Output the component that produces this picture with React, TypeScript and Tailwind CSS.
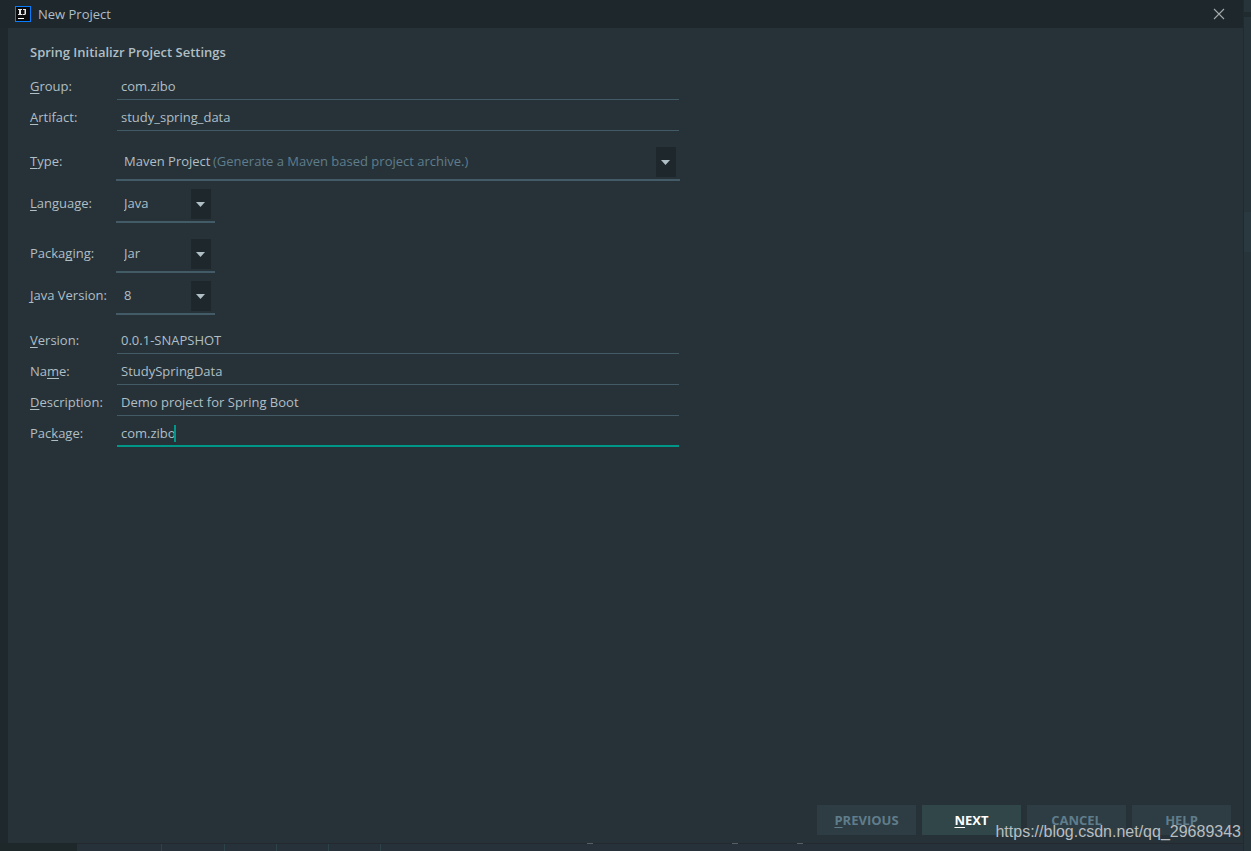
import type { ReactNode } from 'react';

function Mnemonic({ text, at }: { text: string; at: number }) {
  return (
    <>
      {text.slice(0, at)}
      <span className="underline underline-offset-2 [text-decoration-skip-ink:none]">{text[at]}</span>
      {text.slice(at + 1)}
    </>
  );
}

type RowProps = { id: string; label: string; at: number; children: ReactNode };

function Row({ id, label, at, children }: RowProps) {
  return (
    <div className="flex items-stretch">
      <label htmlFor={id} className="w-[86px] shrink-0 pt-[6px] leading-5 whitespace-nowrap">
        <Mnemonic text={label} at={at} />
      </label>
      {children}
    </div>
  );
}

type TextRowProps = { id: string; label: string; at: number; value: string; focused?: boolean };

function TextRow({ id, label, at, value, focused = false }: TextRowProps) {
  return (
    <div className="flex h-[31px]">
      <label htmlFor={id} className="w-[87px] shrink-0 pt-[7px] leading-5 whitespace-nowrap">
        <Mnemonic text={label} at={at} />
      </label>
      <div className={focused ? 'relative mr-px flex grow border-b-2 border-[#009688]' : 'relative mr-px flex grow border-b border-[#425b67]'}>
        <input id={id} defaultValue={value} className="mt-[7px] h-5 w-full bg-transparent px-1 leading-5 outline-none" />
        {focused && <span className="absolute top-[9px] left-[57px] h-[17px] w-[2px] bg-[#009688]" />}
      </div>
    </div>
  );
}

type ComboRowProps = { id: string; label: string; at: number; value: string; hint?: string };

function ComboRow({ id, label, at, value, hint }: ComboRowProps) {
  return (
    <Row id={id} label={label} at={at}>
      <div className={hint ? 'relative h-9 grow border-b-2 border-[#425b67]' : 'relative h-9 w-[99px] border-b-2 border-[#425b67]'}>
        <select id={id} className="h-full w-full appearance-none bg-transparent px-2 outline-none">
          <option>{value}</option>
        </select>
        {hint && <span className="pointer-events-none absolute top-[6px] left-[97px] leading-5 text-[#607d8b]">{hint}</span>}
        <span className="pointer-events-none absolute top-[2px] right-1 flex h-[30px] w-5 items-center justify-center bg-[#1e272c]">
          <svg width="10" height="6" viewBox="0 0 10 6" aria-hidden="true">
            <path d="M0 1h9L4.5 6z" fill="#b0bec5" />
          </svg>
        </span>
      </div>
    </Row>
  );
}

function DialogButton({ text, at = -1, primary = false }: { text: string; at?: number; primary?: boolean }) {
  return (
    <button
      type="button"
      className={
        primary
          ? 'h-[30px] w-[99px] bg-[#304649] pt-[2px] font-bold text-white'
          : 'h-[30px] w-[99px] bg-[#2e3c43] pt-[2px] font-bold text-[#607d8b]'
      }
    >
      {at >= 0 ? <Mnemonic text={text} at={at} /> : text}
    </button>
  );
}

function Logo() {
  return (
    <svg width="16" height="16" viewBox="0 0 16 16" aria-hidden="true">
      <rect width="16" height="16" fill="#087cfa" />
      <rect x="1" y="1" width="14" height="14" fill="#0a0c0e" />
      <path d="M3 3h4v1H6v4h1v1H3V8h1V4H3zM8 3h3v5l-1 1H7.500V8H9.500V4H8z" fill="#e6e8ea" />
      <path d="M3 12h6v1H3z" fill="#fff" />
    </svg>
  );
}

export default function App() {
  return (
    <div className="relative flex min-h-screen bg-[#27343a] font-['Open_Sans','Noto_Sans_CJK_SC',sans-serif] text-[13px] text-[#b0bec5]">
      <div className="flex grow flex-col">
        <header className="flex h-7 items-center bg-[#1e272c] pr-[18px] pl-[15px]">
          <Logo />
          <h1 className="ml-[7px] grow leading-5">New Project</h1>
          <button type="button" aria-label="Close" className="flex size-3 items-center justify-center">
            <svg width="12" height="12" viewBox="0 0 12 12" aria-hidden="true">
              <path d="M1 1l10 10M11 1L1 11" stroke="#a4a9ac" strokeWidth="1.1" />
            </svg>
          </button>
        </header>

        <div className="flex grow border-l-8 border-[#1f282d]">
          <main className="flex grow flex-col bg-[#263238] pt-[14px] pr-3 pb-2 pl-[22px]">
            <form className="w-full max-w-[650px]">
              <h2 className="mb-[7px] leading-5 font-semibold">Spring Initializr Project Settings</h2>
              <TextRow id="group" label="Group:" at={0} value="com.zibo" />
              <TextRow id="artifact" label="Artifact:" at={0} value="study_spring_data" />
              <div className="mt-[14px] mb-2 flex flex-col gap-[14px]">
                <div className="flex flex-col gap-[6px]">
                  <ComboRow id="type" label="Type:" at={0} value="Maven Project" hint="(Generate a Maven based project archive.)" />
                  <ComboRow id="language" label="Language:" at={0} value="Java" />
                </div>
                <div className="flex flex-col gap-[6px]">
                  <ComboRow id="packaging" label="Packaging:" at={5} value="Jar" />
                  <ComboRow id="java-version" label="Java Version:" at={0} value="8" />
                </div>
              </div>
              <TextRow id="version" label="Version:" at={0} value="0.0.1-SNAPSHOT" />
              <TextRow id="name" label="Name:" at={2} value="StudySpringData" />
              <TextRow id="description" label="Description:" at={0} value="Demo project for Spring Boot" />
              <TextRow id="package" label="Package:" at={3} value="com.zibo" focused />
            </form>
            <footer className="mt-auto flex justify-end gap-[6px]">
              <DialogButton text="PREVIOUS" at={0} />
              <DialogButton text="NEXT" at={0} primary />
              <DialogButton text="CANCEL" />
              <DialogButton text="HELP" />
            </footer>
          </main>
        </div>

        <div className="flex h-2 bg-[#263139]">
          <div className="w-[77px] bg-[#1e282b]" />
          <div className="flex grow border-t border-[#23292e]">
            <div className="w-[85px] border-r border-[#2e4249]" />
            <div className="w-[63px] border-r border-[#2e4249]" />
            <div className="w-[52px] border-r border-[#2e4249]" />
            <div className="w-[52px] border-r border-[#2e4249]" />
            <div className="w-[52px] border-r border-[#2e4249]" />
            <div className="-mt-px ml-[206px] h-px w-[6px] bg-[#566064]" />
            <div className="-mt-px ml-[139px] h-px w-[6px] bg-[#566064]" />
            <div className="-mt-px ml-[59px] h-px w-[6px] bg-[#566064]" />
          </div>
        </div>
      </div>

      <aside className="flex w-2 flex-col border-l border-[#23292e]">
        <div className="h-3" />
        <div className="h-[5px] bg-[#202b30]" />
        <div className="h-[195px]" />
        <div className="h-10 bg-[#2a3940]" />
      </aside>

      <p className="pointer-events-none absolute right-[10px] bottom-[7px] font-['Liberation_Sans',Arial,sans-serif] text-base leading-6 text-[#b9bec0]">
        https://blog.csdn.net/qq_29689343
      </p>
    </div>
  );
}
